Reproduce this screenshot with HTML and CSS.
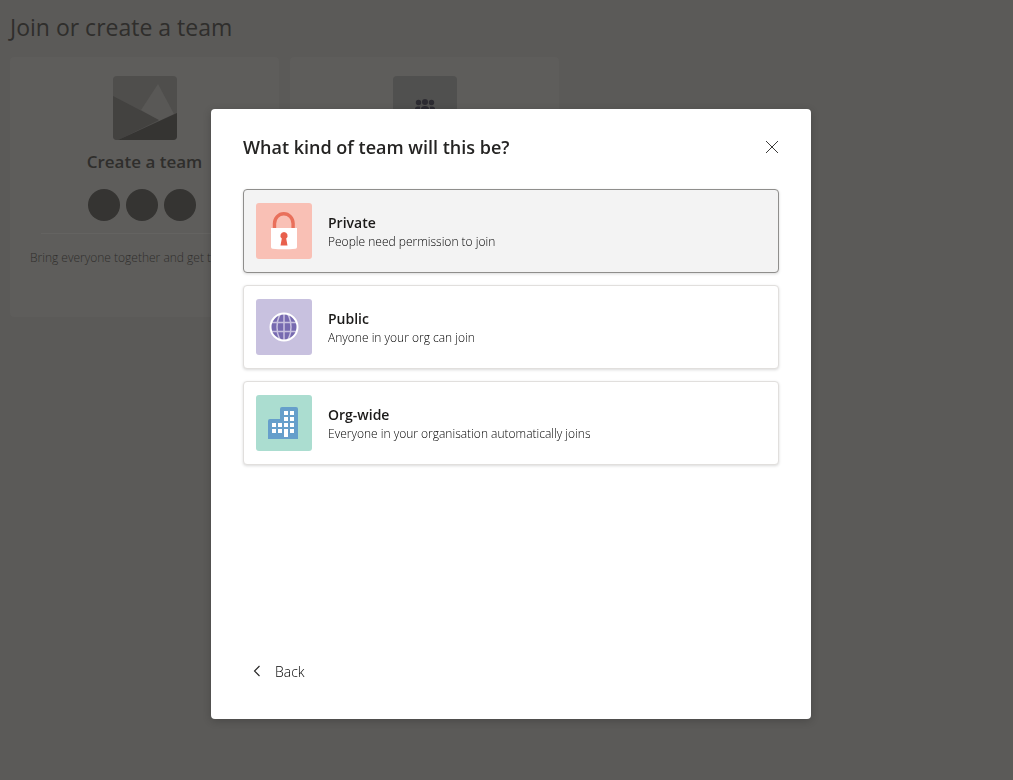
FILE: index.html
```html
<!DOCTYPE html>
<html lang="en">
<head>
    <meta charset="UTF-8">
    <meta name="viewport" content="width=device-width, initial-scale=1.0">
    <title>Join or create a team</title>
    <link rel="stylesheet" href="styles.css">
</head>
<body>
    <main class="page">
        <h1>Join or create a team</h1>
        <div class="team-cards">
            <section class="team-card">
                <svg class="team-picture" viewBox="0 0 64 64" aria-hidden="true">
                    <rect width="64" height="64" fill="#4f4e4c"/>
                    <path d="M28 34 45 8l16 30-15 7z" fill="#595856"/>
                    <path d="M0 20 46 44 5 64H0z" fill="#434240"/>
                    <path d="M64 37v27H5z" fill="#353432"/>
                </svg>
                <h2>Create a team</h2>
                <div class="avatars">
                    <span class="avatar"></span>
                    <span class="avatar"></span>
                    <span class="avatar"></span>
                </div>
                <hr>
                <p>Bring everyone together and get to work!</p>
            </section>
            <section class="team-card">
                <svg class="team-picture" viewBox="0 0 64 64" aria-hidden="true">
                    <rect width="64" height="64" fill="#50504f"/>
                    <g fill="#2c2b31">
                        <circle cx="25.500" cy="26.500" r="2.700"/>
                        <circle cx="32" cy="26" r="3"/>
                        <circle cx="38.500" cy="26.500" r="2.700"/>
                        <path d="M22 40v-7q0-2.500 2.500-2.500h2.500v9.500zM28 40v-7q0-3 4-3t4 3v7zM37 40v-9.500h2.500q2.500 0 2.500 2.500v7z"/>
                    </g>
                </svg>
            </section>
        </div>
    </main>

    <div class="backdrop">
        <div class="dialog" role="dialog" aria-modal="true" aria-labelledby="dialog-title">
            <header class="dialog-header">
                <h2 id="dialog-title">What kind of team will this be?</h2>
                <button class="close" type="button" aria-label="Close">
                    <svg width="14" height="14" viewBox="0 0 14 14" aria-hidden="true">
                        <path d="M1 1 13 13M13 1 1 13" fill="none" stroke="#3b3a39" stroke-width="1"/>
                    </svg>
                </button>
            </header>

            <div class="options">
                <button class="option selected" type="button">
                    <svg class="option-icon" viewBox="0 0 56 56" aria-hidden="true">
                        <rect width="56" height="56" fill="#f9c0b5"/>
                        <path d="M18.500 27v-6.500a9.300 9.800 0 0 1 18.600 0V27" fill="none" stroke="#e9705b" stroke-width="3.400"/>
                        <path d="M15 25h26v19q0 1.500-1.500 1.700-11.500 1.300-23 0Q15 45.500 15 44z" fill="#fff"/>
                        <path d="M28 29a3.700 3.700 0 0 1 2.200 6.600l1.300 6.900h-7l1.300-6.900A3.700 3.700 0 0 1 28 29z" fill="#e8604c"/>
                    </svg>
                    <span class="option-text">
                        <strong>Private</strong>
                        <span>People need permission to join</span>
                    </span>
                </button>
                <button class="option" type="button">
                    <svg class="option-icon" viewBox="0 0 56 56" aria-hidden="true">
                        <rect width="56" height="56" fill="#c8c1df"/>
                        <circle cx="28" cy="28" r="13.500" fill="#776ab0"/>
                        <g fill="none" stroke="#c8c1df" stroke-width="1.500">
                            <ellipse cx="28" cy="28" rx="7" ry="15"/>
                            <path d="M28 15v26M15.500 23.500h25M15.500 32.500h25"/>
                        </g>
                        <circle cx="28" cy="28" r="13.500" fill="none" stroke="#fff" stroke-width="2"/>
                    </svg>
                    <span class="option-text">
                        <strong>Public</strong>
                        <span>Anyone in your org can join</span>
                    </span>
                </button>
                <button class="option" type="button">
                    <svg class="option-icon" viewBox="0 0 56 56" aria-hidden="true">
                        <rect width="56" height="56" fill="#abddd0"/>
                        <path d="M12 44V26q0-2 2-2h10V14q0-2 2-2h14q2 0 2 2v30z" fill="#669fcb"/>
                        <path d="M28 16h4v4h-4zM34 16h4v4h-4zM28 22h4v4h-4zM34 22h4v4h-4zM16 28h4v4h-4zM22 28h4v4h-4zM28 28h4v4h-4zM34 28h4v4h-4zM16 34h4v4h-4zM22 34h4v4h-4zM28 34h4v8h-4zM34 34h4v4h-4z" fill="#fff"/>
                    </svg>
                    <span class="option-text">
                        <strong>Org-wide</strong>
                        <span>Everyone in your organisation automatically joins</span>
                    </span>
                </button>
            </div>

            <footer class="dialog-footer">
                <button class="back" type="button">
                    <svg width="8" height="12" viewBox="0 0 8 12" aria-hidden="true">
                        <path d="M6.500 1 1.500 6l5 5" fill="none" stroke="#252423" stroke-width="1.100"/>
                    </svg>
                    Back
                </button>
            </footer>
        </div>
    </div>
</body>
</html>
```
FILE: styles.css
```css
* {
    margin: 0;
    padding: 0;
    box-sizing: border-box;
}

body {
    font-family: 'Segoe UI', 'Open Sans', 'Noto Sans', sans-serif;
    background: #5b5a58;
    color: #252423;
    min-height: 100vh;
}

button {
    font: inherit;
    color: inherit;
    background: none;
    border: none;
    cursor: pointer;
}

svg {
    display: block;
}

/* Dimmed page */
.page {
    padding: 11px 10px;
    color: #2f2e2c;
}

h1 {
    font-size: 23px;
    font-weight: 400;
    line-height: 32px;
    margin-bottom: 14px;
}

.team-cards {
    display: flex;
    gap: 11px;
}

.team-card {
    display: flex;
    flex-direction: column;
    align-items: center;
    width: 269px;
    height: 260px;
    padding: 19px 20px;
    background: #5e5d5b;
    border-radius: 4px;
}

.team-picture {
    width: 64px;
    height: 64px;
    border-radius: 4px;
}

.team-card h2 {
    font-size: 17px;
    font-weight: 600;
    line-height: 24px;
    margin: 10px 0 15px;
}

.avatars {
    display: flex;
}

.avatar {
    width: 32px;
    height: 32px;
    margin-right: 6px;
    border-radius: 50%;
    background: #353432;
}

.team-card hr {
    width: 208px;
    margin: 12px 0 16px;
    border: none;
    border-top: 1px solid #646361;
}

.team-card p {
    width: 100%;
    font-size: 12px;
    font-weight: 300;
    line-height: 16px;
    white-space: nowrap;
}

/* Dialog */
.backdrop {
    position: fixed;
    inset: 0;
    display: grid;
    place-items: center;
    padding: 48px 0 0 9px;
}

.dialog {
    display: flex;
    flex-direction: column;
    width: 600px;
    max-width: 100%;
    min-height: 610px;
    padding: 24px 32px;
    background: #fff;
    border-radius: 4px;
    box-shadow: 0 2px 8px rgba(0, 0, 0, 0.2);
}

.dialog-header {
    display: flex;
    align-items: center;
    justify-content: space-between;
    height: 28px;
    margin-bottom: 28px;
}

.dialog-header h2 {
    font-size: 18px;
    font-weight: 600;
    line-height: 28px;
}

.options {
    display: flex;
    flex-direction: column;
    gap: 12px;
}

.option {
    display: flex;
    align-items: center;
    gap: 16px;
    height: 84px;
    padding: 0 12px;
    text-align: left;
    background: #fff;
    border: 1px solid #e1dfdd;
    border-radius: 4px;
    box-shadow: 0 1px 3px rgba(0, 0, 0, 0.15);
}

.option.selected {
    background: #f3f3f3;
    border-color: #8f8e8c;
}

.option-icon {
    width: 56px;
    height: 56px;
    border-radius: 3px;
}

.option-text {
    display: flex;
    flex-direction: column;
    padding-top: 2px;
    font-size: 12px;
    font-weight: 300;
    line-height: 18px;
    color: #000;
}

.option-text strong {
    font-size: 14px;
    font-weight: 600;
    line-height: 20px;
    color: #1b1a19;
}

.dialog-footer {
    margin-top: auto;
    padding-bottom: 8px;
}

.back {
    display: flex;
    align-items: center;
    gap: 14px;
    height: 32px;
    padding: 0 10px;
    font-size: 14px;
    font-weight: 300;
    color: #000;
}
```
